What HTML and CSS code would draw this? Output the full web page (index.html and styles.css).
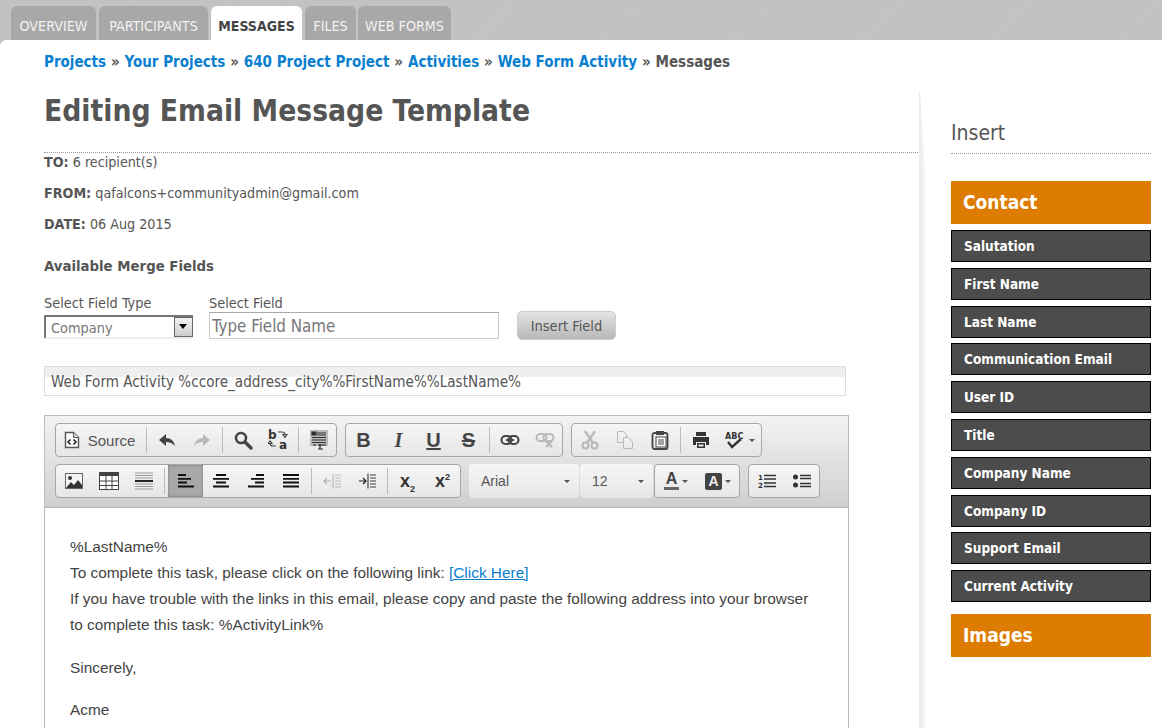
FILE: index.html
```html
<!DOCTYPE html>
<html lang="en">
<head>
  <meta charset="UTF-8" />
  <meta name="viewport" content="width=device-width, initial-scale=1.0" />
  <title>Editing Email Message Template</title>
  <link rel="stylesheet" href="styles.css">
</head>
<body>
  <nav class="tabs">
    <a class="tab tab-overview">OVERVIEW</a>
    <a class="tab tab-participants">PARTICIPANTS</a>
    <a class="tab tab-messages active">MESSAGES</a>
    <a class="tab tab-files">FILES</a>
    <a class="tab tab-forms">WEB FORMS</a>
  </nav>

  <div class="panel">
    <main class="main">
      <p class="crumbs"><a>Projects</a> <span>»</span> <a>Your Projects</a> <span>»</span> <a>640 Project Project</a> <span>»</span> <a>Activities</a> <span>»</span> <a>Web Form Activity</a> <span>»</span> Messages</p>
      <h1>Editing Email Message Template</h1>
      <div class="meta">
        <p><b>TO:</b> 6 recipient(s)</p>
        <p><b>FROM:</b> qafalcons+communityadmin@gmail.com</p>
        <p><b>DATE:</b> 06 Aug 2015</p>
      </div>

      <h2>Available Merge Fields</h2>
      <div class="merge-row">
        <div class="field field-type">
          <label>Select Field Type</label>
          <div class="select-box">
            <select><option>Company</option></select>
            <span class="select-arrow"></span>
          </div>
        </div>
        <div class="field field-name">
          <label>Select Field</label>
          <input type="text" placeholder="Type Field Name" />
        </div>
        <button class="insert-btn">Insert Field</button>
      </div>

      <div class="subject">Web Form Activity %ccore_address_city%%FirstName%%LastName%</div>

      <div class="editor">
        <div class="toolbar">
          <div class="tool-row">
            <div class="group">
              <span class="btn btn-source">
                <svg width="16" height="18" viewBox="0 0 16 18"><path d="M1.5 1.500h8l5 5v10h-13z" fill="#fff" stroke="#555" stroke-width="1.400"/><path d="M9.500 1.500v5h5" fill="#ddd" stroke="#555"/><path d="M6.500 8.500l-2.500 2.500 2.500 2.500M9.500 8.500l2.500 2.500-2.500 2.500" fill="none" stroke="#222" stroke-width="1.500"/></svg>
                Source
              </span>
              <i class="sep"></i>
              <span class="btn"><svg width="20" height="16" viewBox="0 0 20 16"><path d="M9 2L2 8l7 6v-4c4 0 6 1 9 4-1-5-4-8-9-8z" fill="#444"/></svg></span>
              <span class="btn off"><svg width="20" height="16" viewBox="0 0 20 16"><path d="M11 2l7 6-7 6v-4c-4 0-6 1-9 4 1-5 4-8 9-8z" fill="#444"/></svg></span>
              <i class="sep"></i>
              <span class="btn"><svg width="20" height="20" viewBox="0 0 20 20"><circle cx="8" cy="8" r="5" fill="none" stroke="#444" stroke-width="2.600"/><path d="M12 12l6 6" stroke="#444" stroke-width="3.400" stroke-linecap="round"/></svg></span>
              <span class="btn"><svg width="20" height="22" viewBox="0 0 20 22"><text x="0" y="10" class="svg-letter">b</text><text x="11" y="20" class="svg-letter">a</text><path d="M10 3h4q3 0 3 3M17 8.500l-2-3h4zM8 17H5q-3 0-3-3M2 12l-2 2.500h4z" fill="none" stroke="#444" stroke-width="1.200"/></svg></span>
              <i class="sep"></i>
              <span class="btn"><svg width="20" height="20" viewBox="0 0 20 20"><rect x="1" y="0" width="18" height="16" fill="#bbb"/><path d="M3 2h4v3H3zM8 3h9M8 5h9M3 7.500h14M3 10h14M3 12.500h14" stroke="#333" stroke-width="1.200" fill="#333"/><path d="M4 15h3M9 15h8M11 14v5M9 19h5" stroke="#222" stroke-width="1.200"/></svg></span>
            </div>
            <div class="group">
              <span class="btn txt bold">B</span>
              <span class="btn txt ital">I</span>
              <span class="btn txt under">U</span>
              <span class="btn txt strike">S</span>
              <i class="sep"></i>
              <span class="btn"><svg width="20" height="12" viewBox="0 0 20 12"><rect x="1.500" y="2" width="10" height="8" rx="4" fill="none" stroke="#444" stroke-width="2"/><rect x="8.500" y="2" width="10" height="8" rx="4" fill="none" stroke="#444" stroke-width="2"/><path d="M6 6h8" stroke="#444" stroke-width="2"/></svg></span>
              <span class="btn off"><svg width="20" height="16" viewBox="0 0 20 16"><rect x="1.500" y="2" width="10" height="7" rx="3.500" fill="none" stroke="#444" stroke-width="2"/><rect x="8.500" y="2" width="10" height="7" rx="3.500" fill="none" stroke="#444" stroke-width="2"/><path d="M11 9l6 6M17 9l-6 6" stroke="#444" stroke-width="2"/></svg></span>
            </div>
            <div class="group">
              <span class="btn off"><svg width="18" height="20" viewBox="0 0 18 20"><path d="M4 1l8 12M14 1L6 13" stroke="#444" stroke-width="2.400"/><circle cx="4.500" cy="15.500" r="3" fill="none" stroke="#444" stroke-width="2"/><circle cx="13.500" cy="15.500" r="3" fill="none" stroke="#444" stroke-width="2"/></svg></span>
              <span class="btn off"><svg width="18" height="20" viewBox="0 0 18 20"><path d="M1.500 1.500h6l3 3v8h-9z" fill="none" stroke="#444"/><path d="M7.500 7.500h5l4 4v7h-9z" fill="#f0f0f0" stroke="#444"/></svg></span>
              <span class="btn"><svg width="18" height="20" viewBox="0 0 18 20"><rect x="1.500" y="3" width="15" height="16" rx="2" fill="none" stroke="#444" stroke-width="1.800"/><rect x="5" y="1" width="8" height="4" fill="#444"/><rect x="5" y="7" width="10" height="10" fill="#fff" stroke="#444"/><path d="M7 10h6M7 12h6M7 14h6" stroke="#444"/></svg></span>
              <i class="sep"></i>
              <span class="btn"><svg width="18" height="18" viewBox="0 0 18 18"><path d="M4 1h10v4H4z" fill="#333"/><path d="M1 6h16v8h-3v-3H4v3H1z" fill="#333"/><path d="M5 12h8v5H5z" fill="#333"/><path d="M6.500 13.500h5v2h-5z" fill="#eee"/></svg></span>
              <span class="btn btn-arrow"><svg width="21" height="20" viewBox="0 0 21 20"><text x="0" y="9" class="svg-abc">ABC</text><path d="M3 12l4 5 9-8" fill="none" stroke="#333" stroke-width="2.400"/></svg><i class="caret"></i></span>
            </div>
          </div>
          <div class="tool-row">
            <div class="group">
              <span class="btn"><svg width="18" height="16" viewBox="0 0 18 16"><rect x=".5" y=".5" width="17" height="15" fill="#f4f4f4" stroke="#666"/><circle cx="5" cy="5" r="2" fill="#333"/><path d="M1 15l5-6 3 3 4-5 4 5v3z" fill="#333"/></svg></span>
              <span class="btn"><svg width="20" height="18" viewBox="0 0 20 18"><rect x=".5" y=".5" width="19" height="17" fill="#fff" stroke="#444"/><rect x="0" y="0" width="20" height="4" fill="#444"/><path d="M7 4v14M13 4v14M0 9h20M0 13.500h20" stroke="#444"/></svg></span>
              <span class="btn"><svg width="18" height="18" viewBox="0 0 18 18"><path d="M0 1h18M0 3.500h18M0 6h18M0 12h18M0 14.500h18M0 17h18" stroke="#999"/><path d="M0 9h18" stroke="#222" stroke-width="2"/></svg></span>
              <i class="sep sep-wide"></i>
              <span class="btn on"><svg width="16" height="14" viewBox="0 0 16 14"><path d="M0 1h8M0 4.800h13M0 8.500h9M0 12.500h16" stroke="#111" stroke-width="1.800"/></svg></span>
              <span class="btn"><svg width="16" height="14" viewBox="0 0 16 14"><path d="M3 1h10M0 4.800h16M3 8.500h10M0 12.500h16" stroke="#111" stroke-width="1.800"/></svg></span>
              <span class="btn"><svg width="16" height="14" viewBox="0 0 16 14"><path d="M8 1h8M3 4.800h13M7 8.500h9M0 12.500h16" stroke="#111" stroke-width="1.800"/></svg></span>
              <span class="btn"><svg width="16" height="14" viewBox="0 0 16 14"><path d="M0 1h16M0 4.800h16M0 8.500h16M0 12.500h16" stroke="#111" stroke-width="1.800"/></svg></span>
              <i class="sep"></i>
              <span class="btn off"><svg width="18" height="16" viewBox="0 0 18 16"><path d="M10 .5v15" stroke="#222"/><path d="M12 2h6M12 5h6M12 8h6M12 11h6M12 14h6" stroke="#444"/><path d="M8 8H1M4 5L1 8l3 3" fill="none" stroke="#222" stroke-width="1.200"/></svg></span>
              <span class="btn"><svg width="18" height="16" viewBox="0 0 18 16"><path d="M10 .5v15" stroke="#222"/><path d="M12 2h6M12 5h6M12 8h6M12 11h6M12 14h6" stroke="#444"/><path d="M1 8h7M5 5l3 3-3 3" fill="none" stroke="#222" stroke-width="1.200"/></svg></span>
              <i class="sep"></i>
              <span class="btn txt script"><span>x<sub>2</sub></span></span>
              <span class="btn txt script"><span>x<sup>2</sup></span></span>
            </div>
            <div class="combo combo-font"><span>Arial</span><i class="caret"></i></div>
            <div class="combo combo-size"><span>12</span><i class="caret"></i></div>
            <div class="group group-color">
              <span class="btn btn-color"><span class="text-a">A</span><i class="caret"></i></span>
              <span class="btn btn-color"><span class="back-a">A</span><i class="caret"></i></span>
            </div>
            <div class="group">
              <span class="btn"><svg width="18" height="16" viewBox="0 0 18 16"><text x="0" y="7" class="svg-num">1</text><text x="0" y="15" class="svg-num">2</text><path d="M6 2.500h12M6 6h12M6 10h12M6 13.500h12" stroke="#333" stroke-width="1.600"/></svg></span>
              <span class="btn"><svg width="18" height="16" viewBox="0 0 18 16"><circle cx="2.500" cy="4" r="2.500" fill="#333"/><circle cx="2.500" cy="12" r="2.500" fill="#333"/><path d="M7 2.500h11M7 5.500h11M7 10.500h11M7 13.500h11" stroke="#333" stroke-width="1.600"/></svg></span>
            </div>
          </div>
        </div>
        <div class="content">
          <p>%LastName%<br>To complete this task, please click on the following link: <a>[Click Here]</a><br>If you have trouble with the links in this email, please copy and paste the following address into your browser to complete this task: %ActivityLink%</p>
          <p>Sincerely,</p>
          <p>Acme</p>
        </div>
      </div>
    </main>

    <aside class="side">
      <h3>Insert</h3>
      <div class="side-head">Contact</div>
      <ul class="side-list">
        <li>Salutation</li>
        <li>First Name</li>
        <li>Last Name</li>
        <li>Communication Email</li>
        <li>User ID</li>
        <li>Title</li>
        <li>Company Name</li>
        <li>Company ID</li>
        <li>Support Email</li>
        <li>Current Activity</li>
      </ul>
      <div class="side-head">Images</div>
    </aside>
  </div>
</body>
</html>
```

FILE: styles.css
```css
:root {
  --text: #555;
  --link: #0a7fd0;
  --orange: #dd7c00;
  --dark: #4c4c4c;
}

html, body {
  height: 728px;
  overflow: hidden;
}

body {
  margin: 0;
  background-color: #c2c2c2;
  background-image:
    repeating-linear-gradient(90deg, rgba(0, 0, 0, 0.012) 0 1px, transparent 1px 47px),
    repeating-linear-gradient(0deg, rgba(255, 255, 255, 0.025) 0 1px, transparent 1px 23px),
    repeating-linear-gradient(135deg, rgba(255, 255, 255, 0.03) 0 1px, transparent 1px 91px);
  color: var(--text);
  font-family: "DejaVu Sans Condensed", "DejaVu Sans", sans-serif;
  font-size: 14px;
}

/* tabs */
.tabs {
  display: flex;
  gap: 3px;
  height: 34px;
  padding: 6px 0 0 11px;
}

.tab {
  box-sizing: border-box;
  height: 34px;
  padding-top: 10px;
  background: #a8a8a8;
  border-radius: 6px 6px 0 0;
  color: #f2f2f2;
  font-size: 14.200px;
  line-height: 20px;
  text-align: center;
}

.tab-overview { width: 85px; }
.tab-participants { width: 109px; }
.tab-messages { width: 91px; }
.tab-files { width: 51px; }
.tab-forms { width: 93px; margin-left: -1px; }

.tab.active {
  background: #fff;
  color: #444;
  font-size: 14px;
  font-weight: bold;
}

/* page panel */
.panel {
  display: flex;
  height: 688px;
  overflow: hidden;
  background: #fff;
  border-radius: 6px 0 0 0;
}

.main {
  box-sizing: border-box;
  flex: none;
  width: 920px;
  padding-left: 44px;
}

.crumbs {
  margin: 12px 0 0;
  font-size: 15px;
  font-weight: bold;
  line-height: 20px;
}

.crumbs a {
  color: var(--link);
}

.crumbs span {
  margin: 0 0.200px;
}

h1 {
  margin: 19px 0 0;
  padding-bottom: 21px;
  border-bottom: 1px dotted #999;
  font-size: 29.700px;
  line-height: 40px;
}

.meta p {
  margin: 0;
  height: 31px;
  font-size: 14.200px;
  line-height: 18px;
}

h2 {
  margin: 11px 0 0;
  font-size: 14.800px;
  line-height: 18px;
}

/* merge field form */
.merge-row {
  display: flex;
  align-items: flex-start;
  margin-top: 19px;
}

.field label {
  display: block;
  font-size: 14.400px;
  line-height: 18px;
}

.field-type {
  width: 165px;
}

.select-box {
  position: relative;
  width: 149px;
  height: 24px;
  margin-top: 3px;
}

.select-box select {
  appearance: none;
  box-sizing: border-box;
  width: 100%;
  height: 100%;
  padding: 2px 0 0 5px;
  background: #fff;
  border: 0;
  border-top: 2px solid #777;
  border-left: 2px solid #777;
  border-bottom: 2px solid #eee;
  color: #777;
  font: inherit;
  font-size: 14.400px;
}

.select-arrow {
  position: absolute;
  top: 2px;
  right: 0;
  box-sizing: border-box;
  width: 19px;
  height: 20px;
  background: linear-gradient(#f2f2f2, #ccc);
  border: 1px solid #666;
}

.select-arrow::after {
  content: "";
  position: absolute;
  top: 6px;
  left: 4px;
  border: 4.500px solid transparent;
  border-top: 5px solid #000;
  border-bottom: 0;
}

.field-name {
  width: 308px;
}

.field-name input {
  box-sizing: border-box;
  display: block;
  width: 290px;
  height: 27px;
  padding: 0 2px;
  border: 1px solid #ccc;
  border-top-color: #aaa;
  font: inherit;
  font-size: 16.800px;
}

.field-name input::placeholder {
  color: #777;
}

.insert-btn {
  box-sizing: border-box;
  width: 99px;
  height: 29px;
  margin-top: 17px;
  background: linear-gradient(#e4e4e4, #b8b8b8);
  border: 1px solid #ccc;
  border-radius: 5px;
  color: #555;
  font: inherit;
  font-size: 14.500px;
}

.subject {
  box-sizing: border-box;
  width: 802px;
  height: 30px;
  margin-top: 26px;
  padding: 6px 0 0 6px;
  background: linear-gradient(#efefef 10px, #fff 10px);
  border: 1px solid #ddd;
  font-size: 15.100px;
  line-height: 18px;
}

/* rich text editor */
.editor {
  box-sizing: border-box;
  width: 805px;
  margin-top: 19px;
  border: 1px solid #bbb;
  border-bottom: 0;
}

.toolbar {
  box-sizing: border-box;
  height: 92px;
  padding: 7px 0 0 10px;
  background: linear-gradient(#f3f3f3, #cfcfcf);
  border-bottom: 1px solid #b6b6b6;
}

.tool-row {
  display: flex;
  gap: 8px;
  height: 35px;
  margin-bottom: 6px;
}

.group {
  display: flex;
  align-items: center;
  box-sizing: border-box;
  height: 34px;
  background: linear-gradient(#f6f6f6, #e6e6e6);
  border: 1px solid #a6a6a6;
  border-radius: 4px;
}

.btn {
  display: flex;
  align-items: center;
  justify-content: center;
  gap: 8px;
  box-sizing: border-box;
  width: 35px;
  height: 32px;
  color: #444;
}

.btn svg {
  flex: none;
}

.btn.off svg {
  opacity: 0.3;
}

.btn.on {
  background: #a8a8a8;
  box-shadow: inset 0 0 3px #777;
}

.btn-source {
  width: 87px;
  color: #555;
  font-family: "Liberation Sans", sans-serif;
  font-size: 15px;
}

.btn-arrow {
  width: 42px;
  gap: 3px;
  margin-left: 1px;
}

.sep {
  flex: none;
  width: 1px;
  height: 26px;
  margin: 0 2.500px;
  background: #bbb;
}

.sep-wide {
  margin: 0 3px;
}

.txt {
  color: #444;
  font-family: "Liberation Sans", sans-serif;
  font-size: 20px;
}

.bold { font-weight: bold; }
.ital { font-family: "Liberation Serif", serif; font-style: italic; font-weight: bold; }
.under { font-weight: bold; text-decoration: underline; }
.strike { font-weight: bold; text-decoration: line-through; }

.script {
  color: #333;
  font-size: 18px;
  font-weight: bold;
  line-height: 1;
}

.script sub, .script sup {
  font-size: 9px;
  line-height: 0;
}

.svg-letter {
  fill: #333;
  font: bold 12px "DejaVu Sans", sans-serif;
}

.svg-abc {
  fill: #333;
  font: bold 9px "DejaVu Sans Condensed", sans-serif;
}

.svg-num {
  fill: #333;
  font: bold 7px "DejaVu Sans", sans-serif;
}

.caret {
  display: inline-block;
  flex: none;
  border: 3px solid transparent;
  border-top: 3px solid #555;
  border-bottom: 0;
}

.combo {
  display: flex;
  align-items: center;
  justify-content: space-between;
  box-sizing: border-box;
  height: 34px;
  padding: 0 9px 0 12px;
  background: linear-gradient(#f6f6f6, #e6e6e6);
  border-radius: 4px;
  color: #555;
  font-family: "Liberation Sans", sans-serif;
  font-size: 14px;
}

.combo-font {
  width: 110px;
}

.combo-size {
  width: 73px;
  margin-left: -7px;
}

.group-color {
  margin-left: -7px;
}

.btn-color {
  width: 42px;
  gap: 3px;
}

.text-a {
  display: block;
  padding: 0 2px 1px;
  border-bottom: 3px solid #666;
  color: #444;
  font: bold 16px/14px "Liberation Sans", sans-serif;
}

.back-a {
  display: block;
  width: 17px;
  height: 17px;
  background: #444;
  border-radius: 2px;
  color: #eee;
  font: bold 14px/17px "Liberation Sans", sans-serif;
  text-align: center;
}

.content {
  box-sizing: border-box;
  height: 220px;
  overflow: hidden;
  padding: 26px 28px 0 25px;
  color: #444;
  font-family: "Liberation Sans", sans-serif;
  font-size: 15.400px;
  line-height: 26px;
}

.content p {
  margin: 0 0 16.500px;
}

.content a {
  color: var(--link);
  text-decoration: underline;
}

/* right column */
.side {
  position: relative;
  box-sizing: border-box;
  width: 242px;
  padding: 80px 0 0 31px;
}

.side::before {
  content: "";
  position: absolute;
  top: 52px;
  left: -1px;
  bottom: 0;
  width: 6px;
  background: linear-gradient(90deg, #ebebeb, #f6f6f6);
  clip-path: polygon(0 0, 1px 0, 100% 80px, 100% 100%, 0 100%);
}

h3 {
  width: 200px;
  margin: 0 0 27px;
  padding-bottom: 7px;
  border-bottom: 1px dotted #999;
  font-size: 21px;
  font-weight: normal;
  line-height: 26px;
}

.side-head {
  box-sizing: border-box;
  width: 200px;
  height: 43px;
  padding-left: 12px;
  background: var(--orange);
  color: #fff;
  font-size: 19px;
  font-weight: bold;
  line-height: 43px;
}

.side-list {
  list-style: none;
  margin: 6px 0 12px;
  padding: 0;
}

.side-list li {
  box-sizing: border-box;
  width: 200px;
  height: 32px;
  margin-bottom: 5.800px;
  padding-left: 12px;
  background: var(--dark);
  border: 1px solid #000;
  color: #fff;
  font-size: 13.500px;
  font-weight: bold;
  line-height: 30px;
}
```
